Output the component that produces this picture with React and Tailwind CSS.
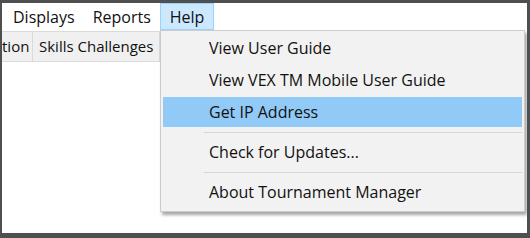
import React from 'react';

const font = { fontFamily: '"Open Sans", "Noto Sans", sans-serif' };

function MenuRow({ label, active }) {
  return (
    <div className="h-[32px] flex items-stretch">
      <div
        className={
          'flex-1 flex items-center whitespace-nowrap pl-[46px] mx-[2px] my-[1px] ' +
          (active ? 'bg-[#91c9f7]' : '')
        }
      >
        {label}
      </div>
    </div>
  );
}

function MenuSep() {
  return (
    <div className="h-[8px] flex items-center pl-[43px] pr-[2px]">
      <div className="h-px flex-1 bg-[#d7d7d7]" />
    </div>
  );
}

export default function App() {
  return (
    <div
      className="w-[530px] h-[238px] bg-white border-[#4f4f4f] border-t-[3px] border-r-[3px] border-b-[5px] border-l-[2px] text-[16px] text-[#111] relative overflow-hidden"
      style={font}
    >
      {/* menu bar */}
      <div className="h-[27px] flex items-stretch pl-[2px]">
        <div className="px-[9px] flex items-center">Displays</div>
        <div className="px-[9px] flex items-center">Reports</div>
        <div className="px-[9px] flex items-center bg-[#cce8ff] border border-[#99d1ff]">Help</div>
      </div>

      {/* tab strip */}
      <div className="mt-[1px] h-[31px] flex self-start w-fit border-t border-b border-[#dadada] bg-[#f0f0f0] whitespace-nowrap text-[15px]">
        <div className="w-[31px] shrink-0 flex items-center border-r border-[#dadada] overflow-hidden">
          <span>tion</span>
        </div>
        <div className="shrink-0 flex items-center px-[6px] border-r border-[#dadada]">Skills Challenges</div>
      </div>

      {/* dropdown */}
      <div className="absolute left-[158px] top-[27px] w-[365px] bg-[#f2f2f2] border border-[#cccccc] shadow-[2px_3px_3px_rgba(0,0,0,0.35)] pt-[1px] pb-[3px]">
        <MenuRow label="View User Guide" />
        <MenuRow label="View VEX TM Mobile User Guide" />
        <MenuRow label="Get IP Address" active />
        <MenuSep />
        <MenuRow label="Check for Updates..." />
        <MenuSep />
        <MenuRow label="About Tournament Manager" />
      </div>
    </div>
  );
}
